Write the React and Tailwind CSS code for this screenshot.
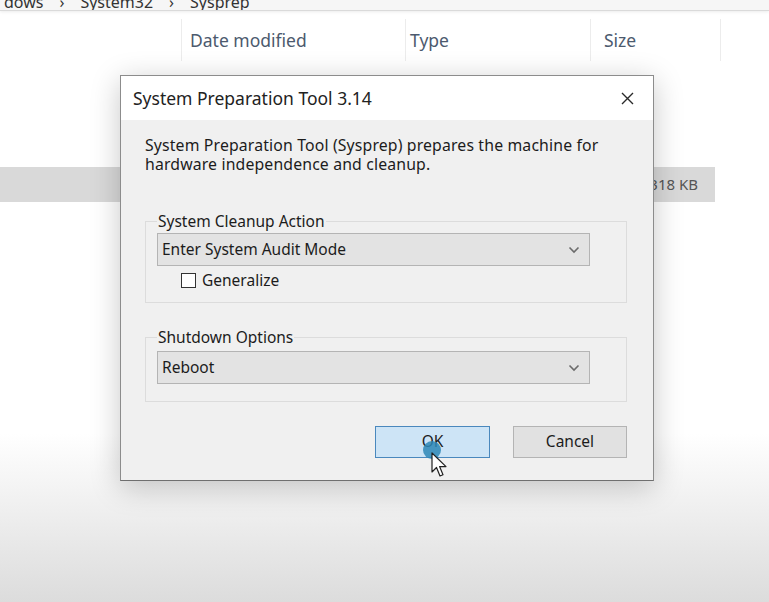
import React from "react";

function Chevron() {
  return (
    <svg width="12" height="8" viewBox="0 0 12 8" className="mr-[9px]">
      <path d="M1.5 1.5 L6 6 L10.5 1.5" fill="none" stroke="#6b6b6b" strokeWidth="1.6" />
    </svg>
  );
}

function Combo({ value }) {
  return (
    <div className="ml-[11px] flex h-[33px] w-[433px] items-center justify-between border border-[#b4b4b4] bg-[#e3e3e3] pl-[4px]">
      <span className="text-[15.5px] text-[#1c1c1c]">{value}</span>
      <Chevron />
    </div>
  );
}

export default function App() {
  return (
    <div
      className="relative h-[602px] w-[769px] overflow-hidden bg-gradient-to-b from-white from-72% to-[#dcdcdc]"
      style={{ fontFamily: '"Noto Sans", "Open Sans", sans-serif' }}
    >
      {/* breadcrumb strip (clipped) */}
      <div className="h-[11px] overflow-hidden border-b border-[#dadada] bg-[#f6f6f6] shadow-[0_1px_3px_rgba(0,0,0,0.08)]">
        <div className="-mt-[10px] flex gap-[16px] pl-[4px] text-[16px] text-[#333]">
          <span>dows</span>
          <span>›</span>
          <span>System32</span>
          <span>›</span>
          <span>Sysprep</span>
        </div>
      </div>

      {/* header row */}
      <div className="mt-[8px] flex h-[42px] items-center text-[17.5px] text-[#4c5a6e]">
        <div className="w-[181px]" />
        <div className="flex h-full w-[224px] items-center border-l border-[#ececec] pl-[8px]">Date modified</div>
        <div className="flex h-full w-[185px] items-center border-l border-[#ececec] pl-[4px]">Type</div>
        <div className="flex h-full w-[130px] items-center border-l border-[#ececec] pl-[13px]">Size</div>
        <div className="h-full border-l border-[#ececec]" />
      </div>

      {/* selected row */}
      <div className="mt-[106px] flex h-[35px] w-[715px] items-center justify-end bg-[#d9d9d9] pr-[17px] text-[15px] text-[#555]">
        318 KB
      </div>

      {/* dialog */}
      <div className="absolute left-[120px] top-[75px] flex h-[406px] w-[534px] flex-col border border-[#8c8c8c] border-b-[#6f6f6f] shadow-[0_6px_28px_rgba(0,0,0,0.22)]">
        <div className="flex h-[44px] items-center justify-between bg-white pl-[12px] pr-[19px]">
          <span className="text-[17.5px] text-[#222]">System Preparation Tool 3.14</span>
          <svg width="13" height="13" viewBox="0 0 13 13">
            <path d="M1 1 L12 12 M12 1 L1 12" stroke="#2a2a2a" strokeWidth="1.4" />
          </svg>
        </div>
        <div className="flex flex-1 flex-col bg-[#f0f0f0] pl-[24px] pr-[26px] pt-[16px]">
          <p className="text-[15.8px] leading-[19px] tracking-[0.15px] text-[#1c1c1c]">
            System Preparation Tool (Sysprep) prepares the machine for
            <br />
            hardware independence and cleanup.
          </p>

          <fieldset className="mt-[38px] border border-[#dcdcdc] pb-[13px]">
            <legend className="ml-[11px] px-[1px] text-[15.5px] leading-[18px] text-[#1c1c1c]">System Cleanup Action</legend>
            <div className="mt-[3px]">
              <Combo value="Enter System Audit Mode" />
            </div>
            <div className="mt-[5px] ml-[35px] flex h-[18px] items-center">
              <div className="h-[15px] w-[15px] border border-[#333] bg-white" />
              <span className="ml-[6px] text-[15.5px] leading-[18px] text-[#1c1c1c]">Generalize</span>
            </div>
          </fieldset>

          <fieldset className="mt-[25px] border border-[#dcdcdc] pb-[17px]">
            <legend className="ml-[11px] px-[1px] text-[15.5px] leading-[18px] text-[#1c1c1c]">Shutdown Options</legend>
            <div className="mt-[5px]">
              <Combo value="Reboot" />
            </div>
          </fieldset>

          <div className="mt-[24px] flex justify-end gap-[23px]">
            <div className="flex h-[32px] w-[115px] items-center justify-center border border-[#4a88bd] bg-[#cde4f6] text-[15.5px] text-[#1c1c1c]">
              OK
            </div>
            <div className="flex h-[32px] w-[114px] items-center justify-center border border-[#b4b4b4] bg-[#e1e1e1] text-[15.5px] text-[#1c1c1c]">
              Cancel
            </div>
          </div>
        </div>
      </div>

      {/* click highlight + cursor */}
      <div className="absolute left-[423px] top-[441px] h-[18px] w-[18px] rounded-full bg-[#2d87b6] opacity-85" />
      <svg className="absolute left-[431px] top-[452px]" width="18" height="28" viewBox="0 0 18 28">
        <path d="M1 1 L1 20 L5.5 15.5 L9 24 L12 22.8 L8.6 14.6 L15 14.6 Z" fill="white" stroke="#222" strokeWidth="1.2" strokeLinejoin="round" />
      </svg>
    </div>
  );
}
